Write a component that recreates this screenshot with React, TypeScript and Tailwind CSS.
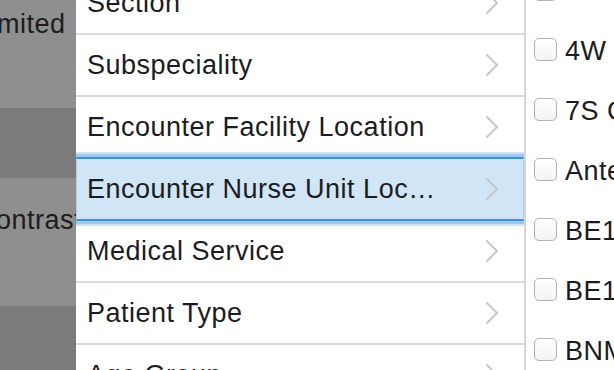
import React from "react";

const items = [
  "Section",
  "Subspeciality",
  "Encounter Facility Location",
  "Encounter Nurse Unit Location",
  "Medical Service",
  "Patient Type",
  "Age Group",
];

const units = ["3E", "4W", "7S Cardiology", "Antepartum", "BE10", "BE11", "BNM"];

function Chevron() {
  return (
    <svg width="14" height="24" viewBox="0 0 14 24" className="shrink-0">
      <path d="M2 2 L12 12 L2 22" fill="none" stroke="#c7c7cc" strokeWidth="2" strokeLinecap="round" strokeLinejoin="round" />
    </svg>
  );
}

export default function App() {
  return (
    <div className="flex h-[370px] w-[614px] overflow-hidden bg-white font-['Liberation_Sans',Arial,sans-serif] text-[27px] tracking-[0.5px] text-[#1c1c1e]">
      {/* left dimmed panel */}
      <div className="flex w-[76px] shrink-0 flex-col overflow-hidden">
        <div className="flex h-[108px] shrink-0 items-start bg-[#8f8f8f] pt-[4px]">
          <span className="ml-[-25px] whitespace-nowrap">Limited</span>
        </div>
        <div className="h-[70px] shrink-0 bg-[#7b7b7b]" />
        <div className="flex h-[128px] shrink-0 items-start bg-[#8f8f8f] pt-[22px]">
          <span className="ml-[-24px] whitespace-nowrap">Contrast</span>
        </div>
        <div className="flex-1 bg-[#7b7b7b]" />
      </div>

      {/* middle list */}
      <div className="w-[450px] shrink-0 overflow-hidden border-r-2 border-[#d6d6d6]">
        <div className="mt-[-27px] flex flex-col">
          {items.map((label, i) => {
            const selected = i === 3;
            return selected ? (
              <div
                key={label}
                className="relative z-10 mt-[-2px] flex h-[64px] shrink-0 items-center border-y-2 border-x border-[#3d8fe0] border-x-[#a9ccf1] bg-[#d0e5f6] pl-[10px] pr-[24px] shadow-[0_-3px_0_#a3c8f0,0_3px_0_#a3c8f0,0_-5px_0_#cfe2f6,0_5px_0_#cfe2f6]"
              >
                <span className="w-[360px] truncate whitespace-nowrap">{label}</span>
                <span className="flex-1" />
                <Chevron />
              </div>
            ) : (
              <div
                key={label}
                className="flex h-[62px] shrink-0 items-center border-b-2 border-[#dcdcdc] pl-[11px] pr-[25px]"
              >
                <span className="whitespace-nowrap">{label}</span>
                <span className="flex-1" />
                <Chevron />
              </div>
            );
          })}
        </div>
      </div>

      {/* right checkbox list */}
      <div className="flex-1 overflow-hidden">
        <div className="mt-[-41px] flex flex-col">
          {units.map((u) => (
            <div key={u} className="flex h-[60px] shrink-0 items-center gap-[8px] pl-[8px]">
              <span className="h-[23px] w-[23px] shrink-0 rounded-[5px] border border-[#b3b3b3] bg-gradient-to-b from-white to-[#f3f3f3]" />
              <span className="mt-[4px] whitespace-nowrap">{u}</span>
            </div>
          ))}
        </div>
      </div>
    </div>
  );
}
